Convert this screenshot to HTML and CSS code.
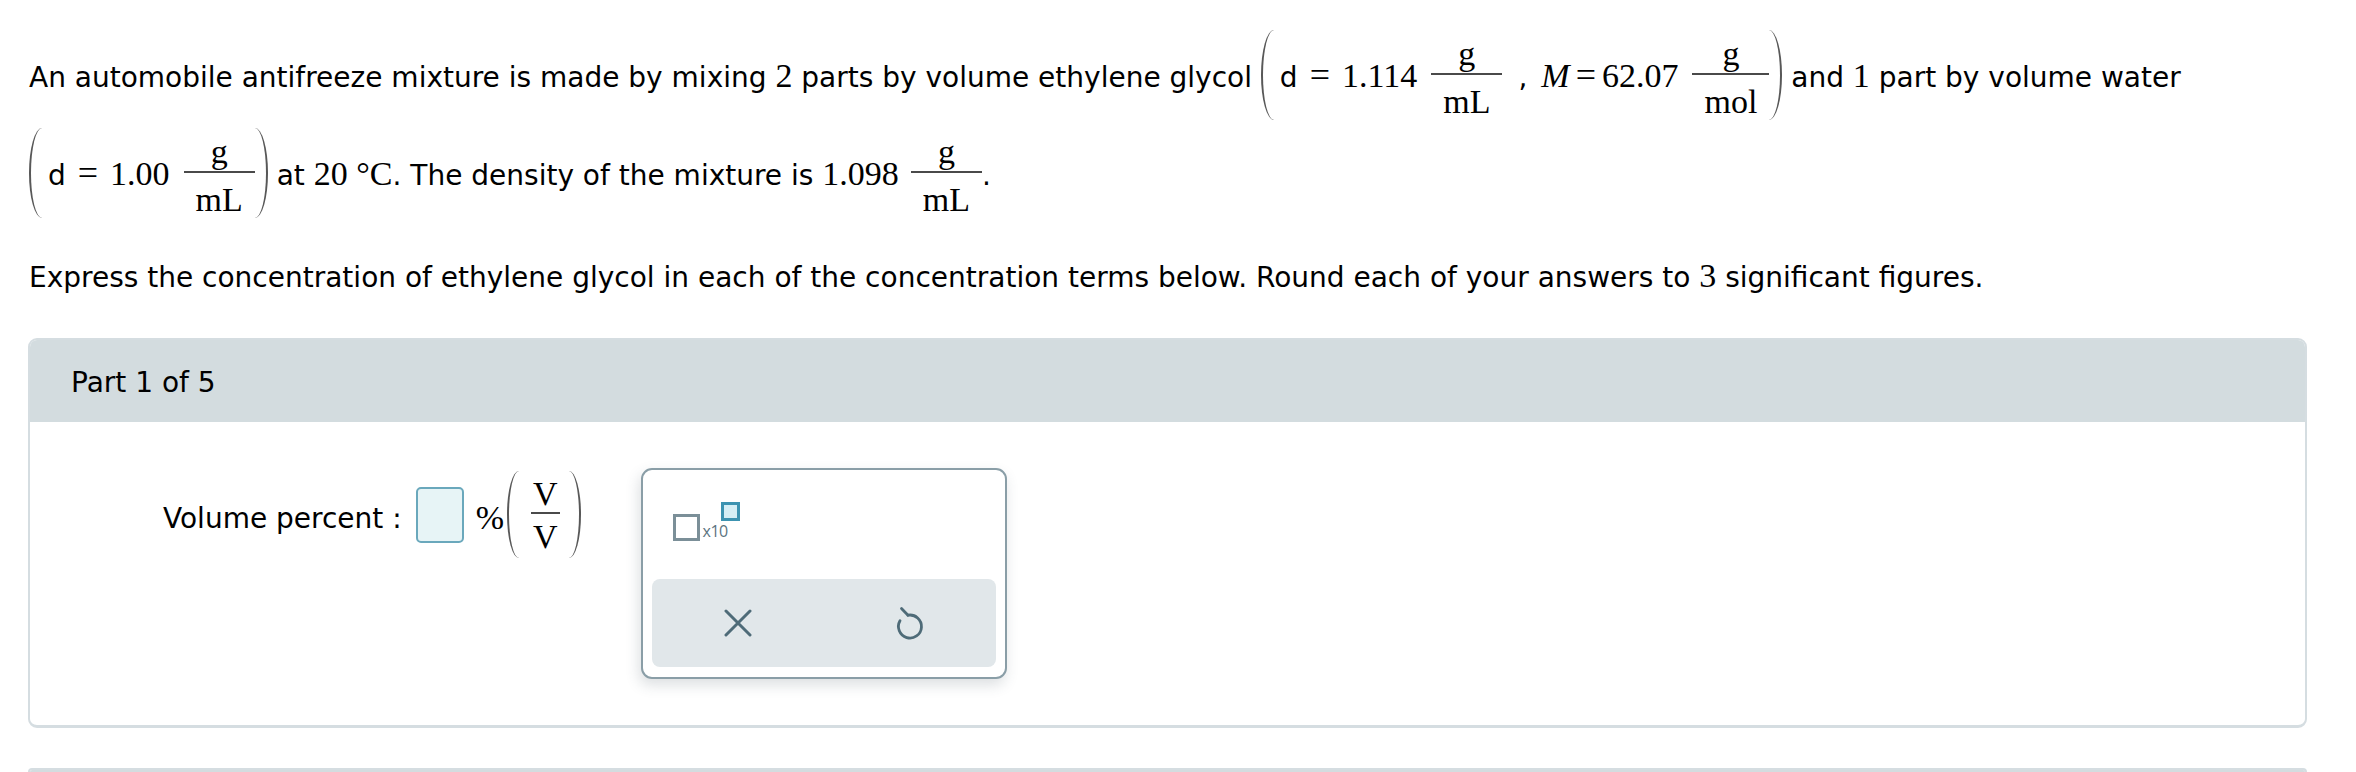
FILE: index.html
```html
<!DOCTYPE html>
<html lang="en">
<head>
<meta charset="utf-8">
<title>Antifreeze concentration</title>
<link rel="stylesheet" href="styles.css">
</head>
<body>
<main class="page">
  <p class="stem">An automobile antifreeze mixture is made by mixing <span class="mn">2</span> parts by volume ethylene glycol <span class="group"><span class="lp"></span><span class="sans">d</span><span class="mo">=</span><span class="mn">1.114</span><span class="frac"><span class="num">g</span><span class="den">mL</span></span><span class="comma">,</span><i class="mi">M</i><span class="mo mo-tight">=</span><span class="mn">62.07</span><span class="frac frac-end"><span class="num">g</span><span class="den">mol</span></span><span class="rp"></span></span> and <span class="mn">1</span> part by volume water <span class="group"><span class="lp"></span><span class="sans">d</span><span class="mo">=</span><span class="mn">1.00</span><span class="frac frac-end"><span class="num">g</span><span class="den">mL</span></span><span class="rp"></span></span> at <span class="mn">20 °C</span>. The density of the mixture is <span class="mn">1.098</span><span class="frac frac-end frac-last"><span class="num">g</span><span class="den">mL</span></span>.</p>

  <p class="prompt">Express the concentration of ethylene glycol in each of the concentration terms below. Round each of your answers to <span class="mn">3</span> significant figures.</p>

  <section class="part">
    <header class="part-head">Part 1 of 5</header>
    <div class="part-body">
      <div class="answer">
        <span class="label">Volume percent :</span>
        <span class="input-box"></span>
        <span class="unit">%</span>
        <span class="unit-frac">
          <span class="lp lp-small"></span>
          <span class="vfrac"><span class="vnum">V</span><span class="vden">V</span></span>
          <span class="rp rp-small"></span>
        </span>
      </div>
      <div class="palette">
        <div class="templates">
          <span class="tpl-base"></span><span class="tpl-x">x10</span><span class="tpl-sup"></span>
        </div>
        <div class="actions">
          <span class="action">
            <svg width="28" height="28" viewBox="0 0 28 28" fill="none" stroke="#4e6b78" stroke-width="3" stroke-linecap="round"><path d="M2 2 L26 26 M26 2 L2 26"/></svg>
          </span>
          <span class="action">
            <svg width="30" height="36" viewBox="0 0 30 36" fill="none" stroke="#4e6b78" stroke-width="2.8" stroke-linecap="round" stroke-linejoin="round"><path d="M5 15.8 A11.5 11.5 0 1 0 13 10.2"/><path d="M6.5 3.5 L13 10.2"/></svg>
          </span>
        </div>
      </div>
    </div>
  </section>

  <section class="part part-next">
    <header class="part-head"></header>
  </section>
</main>
</body>
</html>
```

FILE: styles.css
```css
html, body {
  margin: 0;
  padding: 0;
  background: #ffffff;
}

body {
  font-family: "DejaVu Sans", Verdana, sans-serif;
  font-size: 28px;
  color: #000000;
}

.page {
  padding: 29px 49px 0 28px;
}

.stem {
  margin: 0;
  line-height: 98px;
  padding-left: 1px;
}

.mn {
  font-family: "Liberation Serif", "Times New Roman", serif;
  font-size: 34px;
  line-height: 1;
}

.mi {
  font-family: "Liberation Serif", "Times New Roman", serif;
  font-size: 34px;
  font-style: italic;
  line-height: 1;
  margin-left: 14px;
}

.mo {
  font-family: "Liberation Serif", "Times New Roman", serif;
  font-size: 36px;
  line-height: 1;
  margin: 0 12px;
}

.mo-tight {
  margin: 0 6px 0 6px;
}

.group {
  white-space: nowrap;
}

.lp, .rp {
  display: inline-block;
  box-sizing: border-box;
  width: 13px;
  height: 90px;
  vertical-align: -33px;
  border-color: #585858;
  border-style: solid;
  border-width: 0;
}

.lp {
  border-left-width: 2.5px;
  border-radius: 100% 0 0 100% / 50% 0 0 50%;
  margin-right: 6px;
}

.rp {
  border-right-width: 2.5px;
  border-radius: 0 100% 100% 0 / 0 50% 50% 0;
}

.frac {
  display: inline-flex;
  flex-direction: column;
  align-items: stretch;
  vertical-align: 22px;
  font-family: "Liberation Serif", "Times New Roman", serif;
  font-size: 34px;
  line-height: 34px;
  text-align: center;
  margin: 0 16px 0 14px;
}

.frac-end {
  margin-right: 0;
}

.frac-last {
  margin-left: 12px;
}

.frac .num {
  padding: 0 12px 2px;
  border-bottom: 2px solid #4a4a4a;
}

.frac-last .num {
  padding: 0 10px 2px;
}

.frac-last .den {
  padding: 10px 10px 0;
}

.frac .den {
  padding: 10px 12px 0;
}

.prompt {
  margin: 33px 0 0 1px;
  line-height: 40px;
}

.part {
  margin-top: 40px;
  border: 2px solid #d5dde1;
  border-bottom-width: 3px;
  border-radius: 9px;
  overflow: hidden;
}

.part-head {
  background: #d3dcdf;
  height: 82px;
  display: flex;
  align-items: center;
  padding-left: 41px;
  padding-top: 2px;
  box-sizing: border-box;
}

.part-body {
  display: flex;
  align-items: flex-start;
  padding: 46px 0 46px 133px;
}

.answer {
  display: flex;
  align-items: center;
  margin-top: 3px;
  height: 87px;
}

.label {
  margin-right: 14px;
  padding-top: 8px;
}

.input-box {
  width: 48px;
  height: 56px;
  box-sizing: border-box;
  border: 2px solid #6aa8bc;
  border-radius: 5px;
  background: #e7f4f6;
  margin-right: 12px;
}

.unit {
  font-family: "Liberation Serif", "Times New Roman", serif;
  font-size: 34px;
  padding-top: 6px;
  margin-right: 3px;
}

.unit-frac {
  display: flex;
  align-items: center;
}

.lp-small, .rp-small {
  height: 87px;
  width: 12px;
}

.lp-small {
  margin-right: 12px;
}

.rp-small {
  margin-left: 9px;
}

.vfrac {
  display: flex;
  flex-direction: column;
  font-family: "Liberation Serif", "Times New Roman", serif;
  font-size: 34px;
  line-height: 30px;
  text-align: center;
}

.vnum {
  padding: 2px 2px 3px;
  border-bottom: 2px solid #4a4a4a;
}

.vden {
  padding: 8px 2px 0;
}

.palette {
  margin-left: 60px;
  width: 366px;
  height: 211px;
  box-sizing: border-box;
  border: 2px solid #8a9ea7;
  border-radius: 11px;
  background: #ffffff;
  box-shadow: -2px 6px 14px rgba(60, 80, 90, 0.18);
  display: flex;
  flex-direction: column;
  padding: 32px 9px 10px;
}

.templates {
  display: flex;
  align-items: flex-end;
  padding-left: 21px;
  height: 39px;
}

.tpl-base {
  width: 27px;
  height: 27px;
  box-sizing: border-box;
  border: 3px solid #7b8f98;
}

.tpl-x {
  font-family: "Open Sans", "DejaVu Sans", sans-serif;
  font-size: 16px;
  line-height: 16px;
  color: #5b7480;
  margin-left: 3px;
  margin-bottom: 2px;
  letter-spacing: -0.5px;
}

.tpl-sup {
  align-self: flex-start;
  width: 19px;
  height: 19px;
  box-sizing: border-box;
  border: 3px solid #3c93b1;
  background: #d5eef5;
  margin-left: -7px;
}

.actions {
  margin-top: auto;
  height: 88px;
  background: #e1e7ea;
  border-radius: 8px;
  display: flex;
}

.action {
  flex: 1;
  display: flex;
  align-items: center;
  justify-content: center;
}

.part-next {
  margin-top: 40px;
  border-width: 2px 2px 0;
  border-radius: 9px 9px 0 0;
}

.part-next .part-head {
  height: 2px;
  padding: 0;
}
```
